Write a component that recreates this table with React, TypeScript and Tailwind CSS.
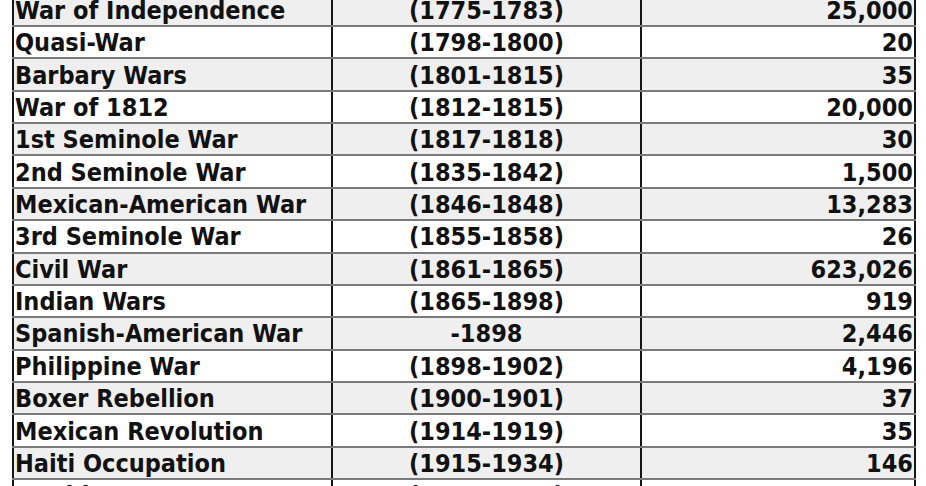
const rows: [string, string, string][] = [
  ["Revolutionary Period", "(1775-1783)", "25,000"],
  ["War of Independence", "(1775-1783)", "25,000"],
  ["Quasi-War", "(1798-1800)", "20"],
  ["Barbary Wars", "(1801-1815)", "35"],
  ["War of 1812", "(1812-1815)", "20,000"],
  ["1st Seminole War", "(1817-1818)", "30"],
  ["2nd Seminole War", "(1835-1842)", "1,500"],
  ["Mexican-American War", "(1846-1848)", "13,283"],
  ["3rd Seminole War", "(1855-1858)", "26"],
  ["Civil War", "(1861-1865)", "623,026"],
  ["Indian Wars", "(1865-1898)", "919"],
  ["Spanish-American War", "-1898", "2,446"],
  ["Philippine War", "(1898-1902)", "4,196"],
  ["Boxer Rebellion", "(1900-1901)", "37"],
  ["Mexican Revolution", "(1914-1919)", "35"],
  ["Haiti Occupation", "(1915-1934)", "146"],
  ["World War I", "(1917-1918)", "116,516"],
];

export default function App() {
  return (
    <div className="h-[486px] w-[926px] overflow-hidden bg-white px-[12px]">
      <table
        className="-mt-[39.7px] w-[902px] table-fixed border-collapse text-[25px] font-bold leading-none text-[#111]"
        style={{ fontFamily: '"DejaVu Sans Condensed", "DejaVu Sans", Verdana, sans-serif' }}
      >
        <colgroup>
          <col className="w-[319px]" />
          <col className="w-[309px]" />
          <col className="w-[274px]" />
        </colgroup>
        <tbody>
          {rows.map(([name, years, deaths], i) => (
            <tr key={name} className={i % 2 === 1 ? "h-[32.36px] bg-[#efefef]" : "h-[32.36px] bg-white"}>
              <td className="border-x-2 border-y-2 border-x-[#151515] border-y-[#7a7a7a] pl-[1px] pt-[1px] text-left whitespace-nowrap">
                {name}
              </td>
              <td className="border-x-2 border-y-2 border-x-[#151515] border-y-[#7a7a7a] pt-[1px] text-center whitespace-nowrap">
                {years}
              </td>
              <td className="border-x-2 border-y-2 border-x-[#151515] border-y-[#7a7a7a] pr-[1px] pt-[1px] text-right whitespace-nowrap">
                {deaths}
              </td>
            </tr>
          ))}
        </tbody>
      </table>
    </div>
  );
}
